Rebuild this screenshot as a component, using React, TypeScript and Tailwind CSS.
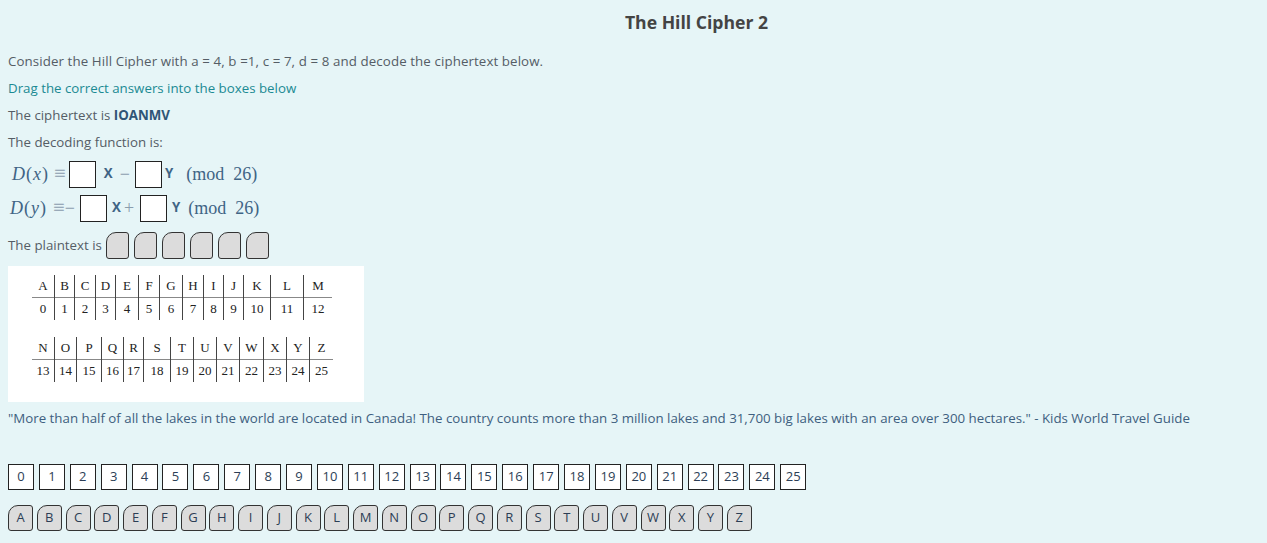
import React from 'react';

const LETTERS = 'ABCDEFGHIJKLMNOPQRSTUVWXYZ'.split('');
const NUMBERS = Array.from({ length: 26 }, (_, i) => String(i));

// column widths of the two lookup tables (A–M, N–Z)
const TOP_COLS = [22, 20, 21, 20, 23, 21, 23, 21, 20, 20, 27, 33, 29];
const BOTTOM_COLS = [22, 22, 25, 22, 20, 27, 23, 23, 23, 24, 23, 23, 24];

const LookupTable = ({ letters, offset, widths }: { letters: string[]; offset: number; widths: number[] }) => (
  <div className="flex font-['Liberation_Serif',serif] text-[13px] text-[#222]">
    {letters.map((l, i) => (
      <div
        key={l}
        style={{ width: widths[i] }}
        className={i === 0 ? 'flex flex-col' : 'flex flex-col border-l border-[#444]'}
      >
        <div className="h-[23px] border-b border-[#888] flex items-end justify-center pb-[2px]">{l}</div>
        <div className="h-[22px] flex items-center justify-center">{offset + i}</div>
      </div>
    ))}
  </div>
);

const AnswerBox = () => <span className="inline-block w-[27px] h-[27px] bg-white border border-[#222]" />;

const App = () => {
  return (
    <div className="min-h-screen bg-[#e6f5f7] px-2 font-['Open_Sans',sans-serif] text-[13.3px] text-[#555d66]">
      <h1 className="h-[44px] flex items-center justify-center pl-[126px] text-[17.6px] font-bold text-[#444]">
        The Hill Cipher 2
      </h1>

      <div className="leading-[27px] pt-[4px]">
        <p className="tracking-[0.1px]">Consider the Hill Cipher with a = 4, b =1, c = 7, d = 8 and decode the ciphertext below.</p>
        <p className="text-[#1b8a93]">Drag the correct answers into the boxes below</p>
        <p>
          The ciphertext is <b className="text-[#2f5576]">IOANMV</b>
        </p>
        <p>The decoding function is:</p>
      </div>

      {/* decoding equations */}
      <div className="font-['Liberation_Serif',serif] text-[18px] text-[#3f6485] pt-[1px]">
        <div className="h-[34px] flex items-center pl-[4px]">
          <span className="w-[38px] tracking-[1px]">
            <i>D</i>(<i>x</i>)
          </span>
          <span className="ml-[4px] mr-[3px] text-[21px] text-[#8a9cad]">≡</span>
          <AnswerBox />
          <b className="ml-[8px] font-['Open_Sans',sans-serif] text-[13.3px]">X</b>
          <span className="ml-[7px] mr-[5px] text-[#8a9cad]">−</span>
          <AnswerBox />
          <b className="ml-[3px] font-['Open_Sans',sans-serif] text-[13.3px]">Y</b>
          <span className="ml-[13px]">(mod&nbsp; 26)</span>
        </div>
        <div className="h-[34px] flex items-center pl-[2px]">
          <span className="w-[38px] tracking-[1px]">
            <i>D</i>(<i>y</i>)
          </span>
          <span className="ml-[5px] text-[21px] text-[#8a9cad]">≡</span>
          <span className="text-[#8a9cad]">−</span>
          <span className="ml-[5px]" />
          <AnswerBox />
          <b className="ml-[5px] font-['Open_Sans',sans-serif] text-[13.3px]">X</b>
          <span className="ml-[3px] mr-[6px] text-[#8a9cad]">+</span>
          <AnswerBox />
          <b className="ml-[5px] font-['Open_Sans',sans-serif] text-[13.3px]">Y</b>
          <span className="ml-[8px]">(mod&nbsp; 26)</span>
        </div>
      </div>

      <div className="h-[41px] flex items-center">
        <span className="mr-[4px]">The plaintext is</span>
        <div className="flex gap-[5px]">
          {Array.from({ length: 6 }).map((_, i) => (
            <span
              key={i}
              className="inline-block w-[23px] h-[27px] bg-[#dcdcdc] border-[1.5px] border-[#333] rounded-tl-[10px] rounded-[3px]"
            />
          ))}
        </div>
      </div>

      {/* letter / number lookup */}
      <div className="w-[356px] h-[136px] bg-white pl-[24px] pt-[9px]">
        <LookupTable letters={LETTERS.slice(0, 13)} offset={0} widths={TOP_COLS} />
        <div className="h-[17px]" />
        <LookupTable letters={LETTERS.slice(13)} offset={13} widths={BOTTOM_COLS} />
      </div>

      <p className="h-[34px] flex items-center text-[#3e5f80]">
        "More than half of all the lakes in the world are located in Canada! The country counts more than 3 million lakes and 31,700 big lakes with an area over 300 hectares." - Kids World Travel Guide
      </p>

      <div className="mt-[28px] flex gap-[4.9px]">
        {NUMBERS.map((n) => (
          <span
            key={n}
            className="w-[26px] h-[26px] bg-white border border-[#222] flex items-center justify-center text-[13px] text-[#2c3e55]"
          >
            {n}
          </span>
        ))}
      </div>

      <div className="mt-[15px] flex gap-[3.75px]">
        {LETTERS.map((l) => (
          <span
            key={l}
            className="w-[25px] h-[26px] bg-[#dcdcdc] border border-[#333] rounded-[3px] rounded-tl-[10px] flex items-center justify-center text-[13px] text-[#2c3e55]"
          >
            {l}
          </span>
        ))}
      </div>
    </div>
  );
};

export default App;
